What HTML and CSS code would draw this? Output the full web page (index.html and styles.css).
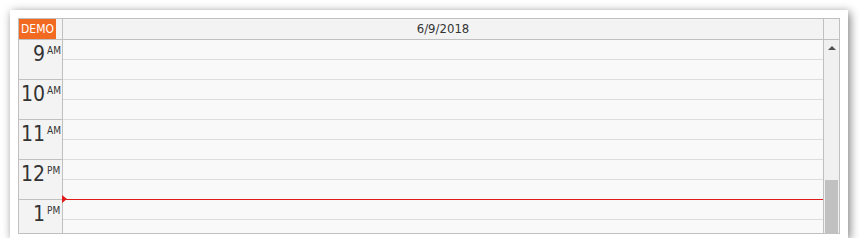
FILE: index.html
```html
<!DOCTYPE html>
<html>
<head>
<meta charset="utf-8">
<link rel="stylesheet" href="styles.css">
</head>
<body>
<div class="panel">
  <div class="calendar">
    <div class="head">
      <div class="corner"><span class="demo">DEMO</span></div>
      <div class="dayhead">6/9/2018</div>
      <div class="scrollhead"></div>
    </div>
    <div class="main">
      <div class="viewport">
        <div class="times">
          <div class="hour"><span class="num">9</span><span class="ampm">AM</span></div>
          <div class="hour"><span class="num">10</span><span class="ampm">AM</span></div>
          <div class="hour"><span class="num">11</span><span class="ampm">AM</span></div>
          <div class="hour"><span class="num">12</span><span class="ampm">PM</span></div>
          <div class="hour"><span class="num">1</span><span class="ampm">PM</span></div>
        </div>
        <div class="cells">
          <div class="cell"></div><div class="cell"></div>
          <div class="cell"></div><div class="cell"></div>
          <div class="cell"></div><div class="cell"></div>
          <div class="cell"></div><div class="cell"></div>
          <div class="cell"></div><div class="cell"></div>
          <div class="now"><span class="now-arrow"></span></div>
        </div>
      </div>
      <div class="scrollbar">
        <div class="arrow-up"></div>
        <div class="thumb"></div>
      </div>
    </div>
  </div>
</div>
</body>
</html>
```
FILE: styles.css
```css
html, body {
  margin: 0;
  padding: 0;
  background: #ffffff;
}
body {
  padding: 10px 0 0 10px;
  font-family: "DejaVu Sans Condensed", "DejaVu Sans", "Liberation Sans", sans-serif;
  color: #333333;
}
.panel {
  width: 822px;
  height: 220px;
  padding: 8px 8px 0 8px;
  background: #ffffff;
  box-shadow: 2px 2px 9px rgba(0, 0, 0, 0.5);
}
.calendar {
  width: 820px;
  height: 214px;
  border: 1px solid #c0c0c0;
  display: flex;
  flex-direction: column;
  overflow: hidden;
}
.head {
  display: flex;
  height: 20px;
  border-bottom: 1px solid #c0c0c0;
  background: #f3f3f3;
  flex: none;
}
.corner {
  width: 43px;
  border-right: 1px solid #c0c0c0;
  flex: none;
}
.demo {
  display: block;
  width: 37px;
  height: 20px;
  background: #f26a21;
  color: #ffffff;
  font-size: 12px;
  line-height: 20px;
  text-align: center;
}
.dayhead {
  width: 760px;
  border-right: 1px solid #c0c0c0;
  flex: none;
  text-align: center;
  font-size: 13px;
  line-height: 20px;
}
.scrollhead {
  flex: 1;
  background: #f3f3f3;
}
.main {
  display: flex;
  flex: 1;
  min-height: 0;
}
.viewport {
  display: flex;
  width: 805px;
  overflow: hidden;
  flex: none;
}
.times {
  width: 43px;
  border-right: 1px solid #c0c0c0;
  background: #f3f3f3;
  flex: none;
}
.hour {
  height: 39px;
  border-bottom: 1px solid #c0c0c0;
  display: flex;
  justify-content: flex-end;
  align-items: flex-start;
  padding-right: 2px;
}
.num {
  font-size: 21px;
  line-height: 24px;
  margin-top: 2px;
}
.ampm {
  font-size: 10px;
  line-height: 12px;
  margin-top: 5px;
  margin-left: 2px;
  width: 13px;
}
.cells {
  width: 760px;
  border-right: 1px solid #c0c0c0;
  background: #f9f9f9;
  position: relative;
  flex: none;
}
.cell {
  height: 19px;
  border-bottom: 1px solid #dddddd;
}
.now {
  position: absolute;
  left: 0;
  right: 0;
  top: 159px;
  height: 1px;
  background: #e01b1b;
}
.now-arrow {
  position: absolute;
  left: -1px;
  top: -4px;
  width: 0;
  height: 0;
  border-top: 4px solid transparent;
  border-bottom: 4px solid transparent;
  border-left: 5px solid #e01b1b;
}
.scrollbar {
  flex: 1;
  background: #f0f0f0;
  display: flex;
  flex-direction: column;
  align-items: center;
  justify-content: space-between;
}
.arrow-up {
  margin-top: 6px;
  width: 0;
  height: 0;
  border-left: 4px solid transparent;
  border-right: 4px solid transparent;
  border-bottom: 4px solid #505050;
}
.thumb {
  width: 13px;
  height: 53px;
  background: #c1c1c1;
}
```
